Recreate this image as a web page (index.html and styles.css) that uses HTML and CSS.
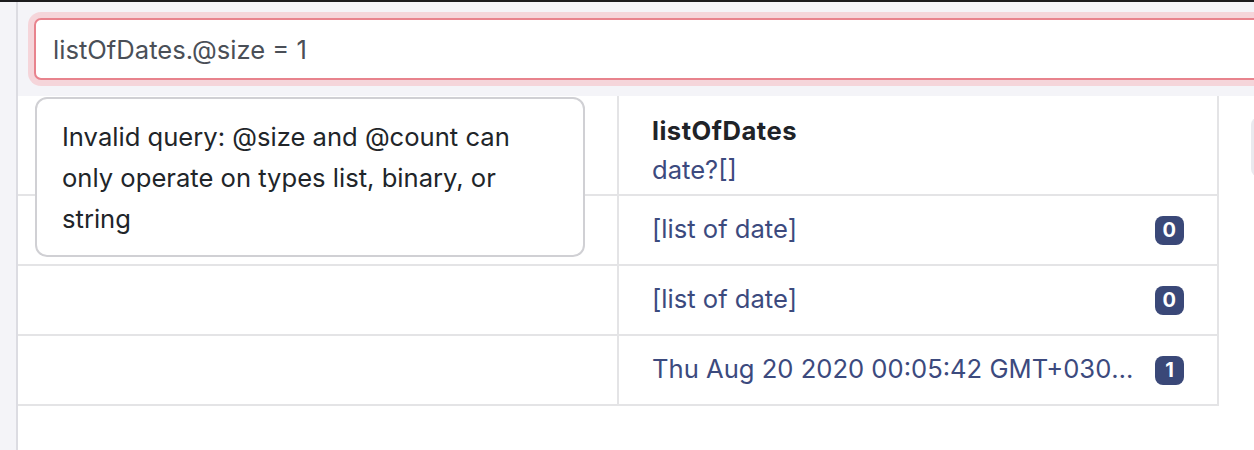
FILE: index.html
```html
<!DOCTYPE html>
<html lang="en">

<head>
    <meta charset="UTF-8">
    <meta name="viewport" content="width=device-width, initial-scale=1.0">
    <title>Query results</title>
    <link rel="stylesheet" href="styles.css">
</head>

<body>

    <div class="app">
        <div class="sidebar"></div>

        <div class="main">
            <div class="query-bar">
                <input class="query-input invalid" type="text" value="listOfDates.@size = 1">
            </div>

            <div class="content">
                <table class="results">
                    <thead>
                        <tr>
                            <th></th>
                            <th>
                                <div class="col-name">listOfDates</div>
                                <div class="col-type">date?[]</div>
                            </th>
                        </tr>
                    </thead>
                    <tbody>
                        <tr>
                            <td></td>
                            <td>
                                <div class="cell">
                                    <span class="cell-value">[list of date]</span>
                                    <span class="badge">0</span>
                                </div>
                            </td>
                        </tr>
                        <tr>
                            <td></td>
                            <td>
                                <div class="cell">
                                    <span class="cell-value">[list of date]</span>
                                    <span class="badge">0</span>
                                </div>
                            </td>
                        </tr>
                        <tr>
                            <td></td>
                            <td>
                                <div class="cell">
                                    <span class="cell-value">Thu Aug 20 2020 00:05:42 GMT+0300 (Eastern European Summer Time)</span>
                                    <span class="badge">1</span>
                                </div>
                            </td>
                        </tr>
                    </tbody>
                </table>

                <div class="side-panel"></div>

                <!-- Error tooltip for the query input -->
                <div class="query-error">
                    Invalid query: @size and @count can only operate on types list, binary, or string
                </div>
            </div>
        </div>
    </div>

</body>

</html>
```

FILE: styles.css
```css
/* Reset */
* {
    box-sizing: border-box;
    margin: 0;
    padding: 0;
}

body {
    background-color: #fff;
    border-top: 2px solid #1c1c1e;
    font-family: 'Inter', 'Roboto', sans-serif;
    font-size: 25.6px;
    color: #212529;
    height: 100vh;
    overflow: hidden;
}

/* Layout */
.app {
    display: flex;
    height: 100%;
}

.sidebar {
    width: 18px;
    flex-shrink: 0;
    background-color: #f4f4f8;
    border-right: 2px solid #dcdce2;
}

.main {
    flex: 1;
    min-width: 0;
    overflow: hidden;
}

/* Query bar */
.query-bar {
    background-color: #f4f4f8;
    padding: 16px 0 16px 16px;
}

.query-input {
    display: block;
    width: calc(100% + 40px);
    height: 62px;
    padding: 0 17px;
    font-family: inherit;
    font-size: 25.6px;
    color: #4a4f57;
    background-color: #fff;
    border: 2px solid #ced4da;
    border-radius: 7px;
    outline: none;
}

.query-input.invalid {
    border-color: #e8838d;
    box-shadow: 0 0 0 6px #f5d5da;
}

/* Results */
.content {
    position: relative;
    display: flex;
    align-items: flex-start;
}

.results {
    border-collapse: collapse;
    table-layout: fixed;
    width: 1200px;
    flex-shrink: 0;
}

.results th,
.results td {
    width: 600px;
    border: 2px solid #e4e4e6;
    padding: 0 33px;
    text-align: left;
    vertical-align: middle;
}

.results th:first-child,
.results td:first-child {
    border-left: none;
}

.results thead th {
    border-top: none;
    height: 99px;
    padding-top: 9px;
}

.results td {
    height: 70px;
    padding-bottom: 3px;
}

.col-name {
    font-weight: 700;
    letter-spacing: 0.5px;
    color: #1f2328;
    line-height: 39px;
}

.col-type {
    font-weight: 400;
    color: #3c4a7e;
    line-height: 39px;
}

.cell {
    display: flex;
    align-items: center;
    gap: 14px;
}

.cell-value {
    flex: 1;
    min-width: 0;
    color: #3c4a7e;
    white-space: nowrap;
    overflow: hidden;
    text-overflow: ellipsis;
}

.badge {
    flex-shrink: 0;
    min-width: 29px;
    height: 29px;
    margin-top: 3px;
    padding: 0 8px;
    border-radius: 8px;
    background-color: #3a4878;
    color: #fff;
    font-size: 20px;
    font-weight: 700;
    line-height: 29px;
    text-align: center;
}

.side-panel {
    width: 40px;
    height: 60px;
    margin: 21px 0 0 32px;
    background-color: #e9e9ee;
    border-radius: 8px 0 0 8px;
    flex-shrink: 0;
}

/* Error tooltip */
.query-error {
    position: absolute;
    top: 1px;
    left: 17px;
    width: 550px;
    padding: 17px 24px 16px 25px;
    background-color: #fff;
    border: 2px solid #d0d0d4;
    border-radius: 12px;
    color: #212529;
    line-height: 41px;
}
```
